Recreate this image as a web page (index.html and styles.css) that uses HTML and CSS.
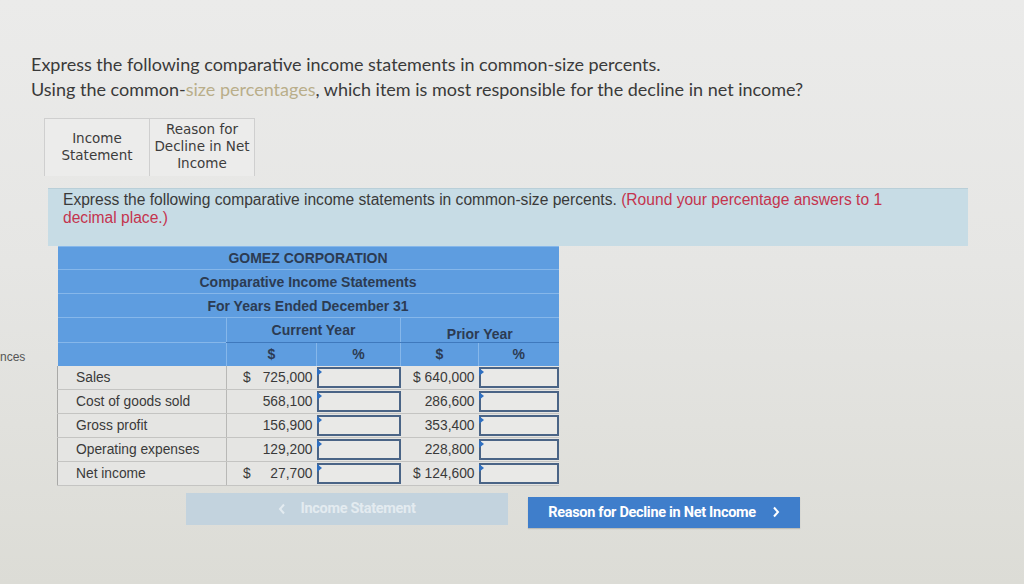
FILE: index.html
```html
<!DOCTYPE html>
<html>
<head>
<meta charset="utf-8">
<link rel="stylesheet" href="styles.css">
</head>
<body>
<div class="page">
  <aside class="sidebar"><span class="side-label">nces</span></aside>
  <main class="main">
    <div class="question">
      <p>Express the following comparative income statements in common-size percents.</p>
      <p>Using the common-<span class="hl">size percentages</span>, which item is most responsible for the decline in net income?</p>
    </div>
    <div class="tabs">
      <div class="tab">Income<br>Statement</div>
      <div class="tab">Reason for<br>Decline in Net<br>Income</div>
    </div>
    <div class="instr">
      <div class="instr-line">Express the following comparative income statements in common-size percents. <span class="red">(Round your percentage answers to 1</span></div>
      <div class="instr-line red">decimal place.)</div>
    </div>
    <div class="table-wrap">
      <table class="stmt">
        <colgroup>
          <col class="c-label"><col class="c-cd"><col class="c-cp"><col class="c-pd"><col class="c-pp">
        </colgroup>
        <thead>
          <tr class="h1"><th colspan="5">GOMEZ CORPORATION</th></tr>
          <tr class="h2"><th colspan="5">Comparative Income Statements</th></tr>
          <tr class="h3"><th colspan="5">For Years Ended December 31</th></tr>
          <tr class="h4"><th></th><th colspan="2">Current Year</th><th colspan="2" class="prior">Prior Year</th></tr>
          <tr class="h5"><th></th><th>$</th><th>%</th><th>$</th><th>%</th></tr>
        </thead>
        <tbody>
          <tr><td class="lbl">Sales</td><td class="amt"><span class="cur">$</span>725,000</td><td class="inp"><div class="box"></div></td><td class="amt">$ 640,000</td><td class="inp"><div class="box"></div></td></tr>
          <tr><td class="lbl">Cost of goods sold</td><td class="amt">568,100</td><td class="inp"><div class="box"></div></td><td class="amt">286,600</td><td class="inp"><div class="box"></div></td></tr>
          <tr><td class="lbl">Gross profit</td><td class="amt">156,900</td><td class="inp"><div class="box"></div></td><td class="amt">353,400</td><td class="inp"><div class="box"></div></td></tr>
          <tr><td class="lbl">Operating expenses</td><td class="amt">129,200</td><td class="inp"><div class="box"></div></td><td class="amt">228,800</td><td class="inp"><div class="box"></div></td></tr>
          <tr><td class="lbl">Net income</td><td class="amt"><span class="cur">$</span>27,700</td><td class="inp"><div class="box"></div></td><td class="amt">$ 124,600</td><td class="inp"><div class="box"></div></td></tr>
        </tbody>
      </table>
    </div>
    <div class="nav">
      <button class="btn btn-prev" type="button"><svg class="chev-svg" width="8" height="12" viewBox="0 0 8 12"><path d="M6 1.5 L2 6 L6 10.5" fill="none" stroke="currentColor" stroke-width="2"/></svg>Income Statement</button>
      <button class="btn btn-next" type="button">Reason for Decline in Net Income<svg class="chev-svg next" width="8" height="12" viewBox="0 0 8 12"><path d="M2 1.5 L6 6 L2 10.5" fill="none" stroke="currentColor" stroke-width="2"/></svg></button>
    </div>
  </main>
</div>
</body>
</html>
```

FILE: styles.css
```css
* { box-sizing: border-box; }
html, body { margin: 0; padding: 0; }
body {
  width: 1024px;
  height: 584px;
  overflow: hidden;
  background: linear-gradient(180deg, #ebebea 0%, #e6e6e4 45%, #dcdcd6 100%);
  font-family: "Open Sans", "Liberation Sans", sans-serif;
  color: #333;
}
.page { display: flex; height: 584px; }
.sidebar {
  width: 31px;
  flex: 0 0 31px;
  padding-top: 350px;
  overflow: hidden;
}
.side-label {
  display: block;
  font-family: "Liberation Sans", sans-serif;
  font-size: 12px;
  color: #555;
  white-space: nowrap;
}
.main { flex: 1; padding-top: 52px; }
.question p {
  margin: 0;
  font-family: "Lato", sans-serif;
  font-size: 18px;
  line-height: 25px;
  color: #3a3a3a;
}
.hl { color: #b9ae8a; }
.tabs {
  display: flex;
  margin: 16px 0 0 13px;
}
.tab {
  width: 106px;
  height: 58px;
  border: 1px solid #cfcfcf;
  border-bottom: none;
  background: #ececeb;
  font-family: "DejaVu Sans", sans-serif;
  font-size: 13.5px;
  line-height: 17px;
  text-align: center;
  color: #3c3c3c;
  display: flex;
  align-items: center;
  justify-content: center;
  padding-bottom: 2px;
}
.tab + .tab { border-left: none; width: 105px; }
.instr {
  margin: 12px 0 0 17px;
  width: 920px;
  height: 58px;
  background: #c7dce5;
  padding: 2px 20px 0 15px;
  font-family: "Liberation Sans", sans-serif;
  font-size: 15.6px;
  line-height: 18px;
  color: #3a3a3a;
  border-top: 1px solid #b9cfd8;
}
.instr-line { white-space: nowrap; }
.red { color: #c4344e; }
.table-wrap { margin-left: 26px; }
.stmt {
  border-collapse: collapse;
  table-layout: fixed;
  width: 501px;
  font-family: "Liberation Sans", sans-serif;
  font-size: 13.8px;
}
.c-label { width: 169px; }
.c-cd { width: 90px; }
.c-cp { width: 84px; }
.c-pd { width: 78px; }
.c-pp { width: 80px; }
.stmt thead th {
  background: #5e9de0;
  color: #2c3b52;
  font-weight: bold;
  font-size: 14px;
  text-align: center;
  padding: 0;
  border-top: 1px solid #86b7ea;
}
.h1 th { height: 23px; }
.h2 th { height: 24px; }
.h3 th { height: 24px; }
.h4 th { height: 25px; vertical-align: middle; }
.h4 th:nth-child(2), .h4 th:nth-child(3) { border-bottom: 1px solid #3f79bd; }
.h4 .prior { padding-top: 8px; }
.h5 th { height: 23px; }
.h5 th + th { border-left: 1px solid #86b7ea; }
.h4 th + th { border-left: 1px solid #86b7ea; }
.stmt tbody td {
  height: 23.4px;
  padding: 0;
  background: #e5e5e3;
  color: #3a3a3a;
  border-bottom: 1px solid #c4c4c2;
}
.lbl {
  padding-left: 18px !important;
  border-left: 1px solid #a9a9a7;
  border-right: 1px solid #b8b8b6;
  white-space: nowrap;
}
.amt {
  text-align: right;
  padding-right: 4px !important;
  white-space: nowrap;
}
.cur { float: left; padding-left: 16px; }
.inp { padding: 1px 0 !important; position: relative; }
.box {
  height: 21px;
  border: 2px solid #4a6486;
  background: #e9e9e7;
}
.inp::before {
  content: "";
  position: absolute;
  left: 0;
  top: 2px;
  border-top: 4px solid transparent;
  border-bottom: 4px solid transparent;
  border-left: 5px solid #2f6fc0;
  z-index: 1;
}
.nav {
  display: flex;
  align-items: flex-start;
  margin: 7px 0 0 155px;
  gap: 20px;
}
.btn {
  border: none;
  display: flex;
  align-items: center;
  justify-content: center;
  font-family: "Roboto", "Liberation Sans", sans-serif;
  font-weight: bold;
  font-size: 14.5px;
  letter-spacing: -0.3px;
  color: #fff;
  cursor: pointer;
}
.btn-prev {
  width: 322px;
  height: 32px;
  background: #c3d3de;
  color: #e3ebf0;
}
.btn-prev .chev-svg { margin-right: 14px; }
.btn-next {
  margin-top: 4px;
  width: 272px;
  height: 31px;
  background: #3f7ecb;
  box-shadow: 0 1px 1px rgba(0,0,0,0.15);
  padding-left: 6px;
}
.chev-svg.next { margin-left: 16px; }
```
